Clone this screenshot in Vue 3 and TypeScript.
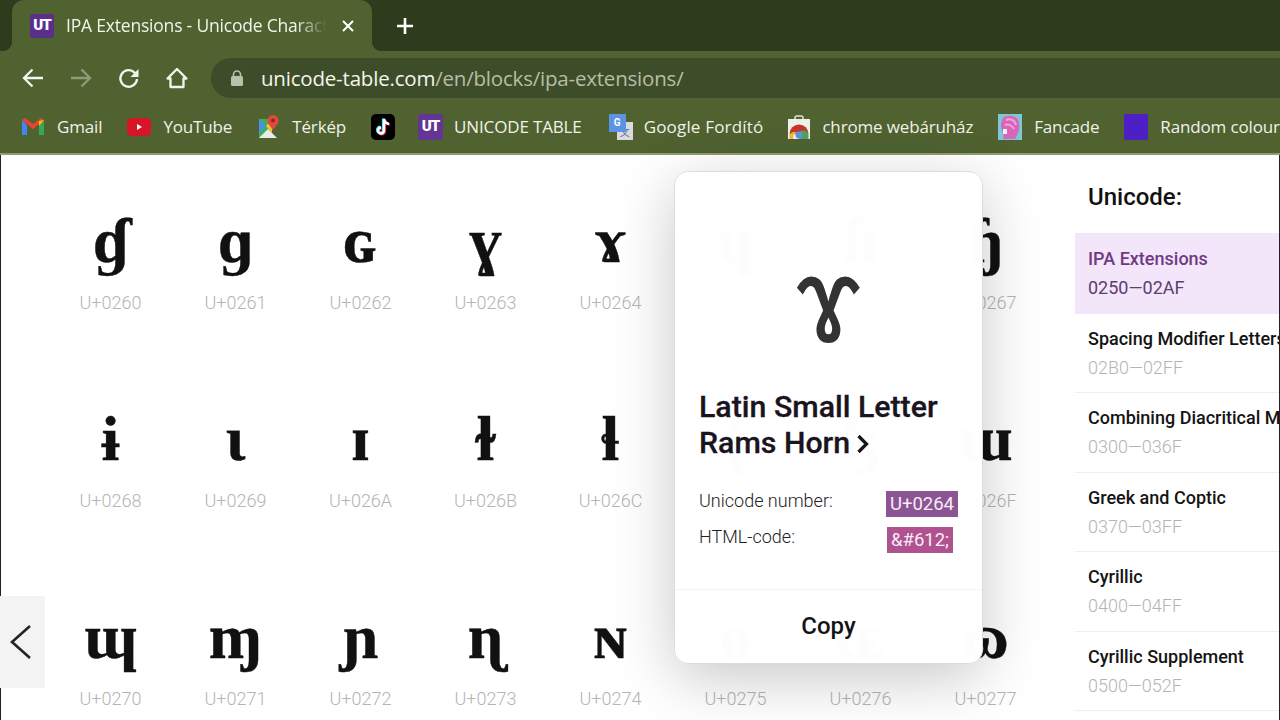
<script setup lang="ts">
const rows: string[][] = [
  ['ɠ','ɡ','ɢ','ɣ','ɤ','ɥ','ɦ','ɧ'],
  ['ɨ','ɩ','ɪ','ɫ','ɬ','ɭ','ɮ','ɯ'],
  ['ɰ','ɱ','ɲ','ɳ','ɴ','ɵ','ɶ','ɷ'],
]
const cells = rows.flat().map((ch) => ({
  ch,
  code: 'U+' + ch.codePointAt(0)!.toString(16).toUpperCase().padStart(4, '0'),
}))
const blocks = [
  { name: 'Spacing Modifier Letters', range: '02B0—02FF' },
  { name: 'Combining Diacritical Marks', range: '0300—036F' },
  { name: 'Greek and Coptic', range: '0370—03FF' },
  { name: 'Cyrillic', range: '0400—04FF' },
  { name: 'Cyrillic Supplement', range: '0500—052F' },
]
</script>

<template>
  <div class="page">
    <header class="tabbar">
      <div class="tab">
        <span class="ut"><span>UT</span></span>
        <span class="tab-title">IPA Extensions - Unicode Character Table</span>
        <svg class="tab-x" width="14" height="14" viewBox="0 0 14 14"><path d="M2 2l10 10M12 2L2 12" stroke="#fff" stroke-width="2" fill="none"/></svg>
      </div>
      <svg class="plus" width="20" height="20" viewBox="0 0 20 20"><path d="M10 2v16M2 10h16" stroke="#fff" stroke-width="2.6" fill="none"/></svg>
    </header>

    <div class="toolbar">
      <div class="navs">
        <svg width="24" height="24" viewBox="0 0 24 24"><path d="M22 12H3M11.500 3.500L3 12l8.500 8.500" stroke="#f4f6ee" stroke-width="2.300" fill="none"/></svg>
        <svg width="24" height="24" viewBox="0 0 24 24"><path d="M2 12h19M12.500 3.500L21 12l-8.500 8.500" stroke="#8f9c78" stroke-width="2.300" fill="none"/></svg>
        <svg width="24" height="24" viewBox="0 0 24 24"><path d="M20 13a8.300 8.300 0 1 1-2.400-6.400L20 9" stroke="#f4f6ee" stroke-width="2.300" fill="none"/><path d="M21.500 3v8h-8z" fill="#f4f6ee"/></svg>
        <svg width="24" height="24" viewBox="0 0 24 24"><path d="M12 3L2.500 12.500H5.500V21h13v-8.500h3z" stroke="#f4f6ee" stroke-width="2.300" fill="none" stroke-linejoin="round"/></svg>
      </div>
      <div class="omnibox">
        <svg width="14" height="18" viewBox="0 0 14 18"><path d="M3.500 8V5.500a3.500 3.500 0 0 1 7 0V8" stroke="#b9c0ab" stroke-width="1.600" fill="none"/><rect x="1" y="7" width="12" height="10" rx="1.500" fill="#b9c0ab"/></svg>
        <span class="url"><b>unicode-table.com</b><i>/en/blocks/ipa-extensions/</i></span>
      </div>
    </div>

    <nav class="bookmarks">
      <a class="bm">
        <svg width="24" height="20" viewBox="0 0 24 20"><path d="M1 3v15h5V8z" fill="#4285f4"/><path d="M18 8v10h5V3z" fill="#34a853"/><path d="M1 3l11 9 11-9-3-2-8 6-8-6z" fill="#ea4335"/><path d="M18 4l5-1-5 6z" fill="#fbbc04"/></svg>
        <span>Gmail</span>
      </a>
      <a class="bm">
        <svg width="24" height="20" viewBox="0 0 24 20"><rect y="1" width="24" height="18" rx="4.500" fill="#d81427"/><path d="M10 7l5 3-5 3z" fill="#fff"/></svg>
        <span>YouTube</span>
      </a>
      <a class="bm maps">
        <svg width="24" height="26" viewBox="0 0 24 26"><path d="M2 5h13v19H2z" fill="#3fae5a"/><path d="M2 24l9-9 9 9z" fill="#e8eaed"/><path d="M2 5l7 7-7 7z" fill="#4a8ff0"/><path d="M9 12l6-7v14z" fill="#fbc02d"/><path d="M16 1a5.500 5.500 0 0 1 5.500 5.500C21.500 10.500 18 12 16 17c-2-5-5.500-6.500-5.500-10.500A5.500 5.500 0 0 1 16 1z" fill="#e2483b"/><circle cx="16" cy="6.500" r="2" fill="#8c2a22"/></svg>
        <span>Térkép</span>
      </a>
      <a class="bm solo">
        <svg width="24" height="26" viewBox="0 0 24 26"><rect width="24" height="26" rx="5" fill="#000"/><path d="M13 5v11.500a3 3 0 1 1-3-3M13 5c.5 3 2.500 4.500 5 5" stroke="#25f4ee" stroke-width="2.600" fill="none" transform="translate(-.8 -.6)"/><path d="M13 5v11.500a3 3 0 1 1-3-3M13 5c.5 3 2.500 4.500 5 5" stroke="#fe2c55" stroke-width="2.600" fill="none" transform="translate(.8 .6)"/><path d="M13 5v11.500a3 3 0 1 1-3-3M13 5c.5 3 2.500 4.500 5 5" stroke="#fff" stroke-width="2.400" fill="none"/></svg>
      </a>
      <a class="bm tight">
        <span class="ut small"><span>UT</span></span>
        <span>UNICODE TABLE</span>
      </a>
      <a class="bm translate">
        <span class="gt"><span class="gt-back">文</span><span class="gt-front">G</span></span>
        <span class="loose">Google Fordító</span>
      </a>
      <a class="bm">
        <svg width="22" height="24" viewBox="0 0 22 24"><path d="M7 5V3a2 2 0 0 1 2-2h4a2 2 0 0 1 2 2v2" stroke="#dfe3d5" stroke-width="1.500" fill="none"/><rect y="4" width="22" height="20" fill="#eef0ea"/><path d="M1.500 19a9.500 9.500 0 0 1 19 0z" fill="#c0392b"/><path d="M5 24a6 6 0 0 1 6-7l-6 0-3.500 2v5z" fill="#e9b93a"/><path d="M11 24v-7a6 6 0 0 1 9.500 2v5z" fill="#4ea35a"/><circle cx="11" cy="20" r="3.500" fill="#5a93e0"/></svg>
        <span>chrome webáruház</span>
      </a>
      <a class="bm">
        <svg width="24" height="26" viewBox="0 0 24 26"><rect width="24" height="26" fill="#7cc8d6"/><path d="M6 3c6-3 14-1 15 6 1 6-1 12-4 16H5c2-4-2-8-2-13 0-4 1-7 3-9z" fill="#d966b8"/><path d="M8 6c4-2 9 0 10 5M7 11c3-1 7 0 9 4" stroke="#f2a6dc" stroke-width="2" fill="none"/><rect x="5" y="15" width="4" height="5" fill="#e9f2f4"/></svg>
        <span>Fancade</span>
      </a>
      <a class="bm">
        <span class="swatch"></span>
        <span>Random colour</span>
      </a>
    </nav>

    <main class="content">
      <section class="chars">
        <div v-for="c in cells" :key="c.code" class="cell">
          <div class="glyph">{{ c.ch }}</div>
          <div class="code">{{ c.code }}</div>
        </div>
      </section>

      <aside class="side">
        <h2>Unicode:</h2>
        <div class="block active">
          <div class="b-name">IPA Extensions</div>
          <div class="b-range">0250—02AF</div>
        </div>
        <div v-for="b in blocks" :key="b.name" class="block">
          <div class="b-name">{{ b.name }}</div>
          <div class="b-range">{{ b.range }}</div>
        </div>
      </aside>

      <button class="back" aria-label="Previous">
        <svg width="26" height="38" viewBox="0 0 26 38"><path d="M22 3L4 19l18 16" stroke="#222" stroke-width="2.600" fill="none"/></svg>
      </button>

      <div class="card">
        <div class="big">ɤ</div>
        <h1>Latin Small Letter<br />Rams Horn<svg class="chev" width="14" height="20" viewBox="0 0 14 20"><path d="M2.500 2l8 8-8 8" stroke="#1a1420" stroke-width="3.200" fill="none"/></svg></h1>
        <dl>
          <div class="kv"><dt>Unicode number:</dt><dd class="b1">U+0264</dd></div>
          <div class="kv"><dt>HTML-code:</dt><dd class="b2">&amp;#612;</dd></div>
        </dl>
        <div class="copy">Copy</div>
      </div>
    </main>
  </div>
</template>

<style>
html, body { margin: 0; background: #fff; }
</style>

<style scoped>
.page {
  position: relative;
  width: 1280px;
  height: 720px;
  overflow: hidden;
  display: flex;
  flex-direction: column;
  font-family: Roboto, "Liberation Sans", sans-serif;
  background: #fff;
}
.tabbar {
  height: 51px;
  flex: none;
  background: #2f3b1d;
  display: flex;
  align-items: center;
  padding-left: 12px;
}
.tab {
  position: relative;
  width: 360px;
  height: 51px;
  box-sizing: border-box;
  background: #4f6230;
  border-radius: 12px 12px 0 0;
  display: flex;
  align-items: center;
  padding-left: 18px;
  color: #f2f4ea;
}
.tab::before, .tab::after {
  content: "";
  position: absolute;
  bottom: 0;
  width: 10px;
  height: 10px;
}
.tab::before { left: -10px; background: radial-gradient(circle at 0 0, transparent 10px, #4f6230 10.500px); }
.tab::after { right: -10px; background: radial-gradient(circle at 100% 0, transparent 10px, #4f6230 10.500px); }
.ut {
  width: 24px;
  height: 24px;
  flex: none;
  background: #5a2f8a;
  border-radius: 3px;
  display: flex;
  align-items: center;
  justify-content: center;
  color: #fff;
  font: 900 15px/1 Roboto, sans-serif;
  letter-spacing: -1px;
}
.tab-title {
  width: 261px;
  margin-left: 12px;
  margin-bottom: 2px;
  flex: none;
  white-space: nowrap;
  overflow: hidden;
  font: 400 17.500px/24px "Open Sans", sans-serif;
  letter-spacing: -0.200px;
  -webkit-mask-image: linear-gradient(90deg, #000 88%, transparent 100%);
  mask-image: linear-gradient(90deg, #000 88%, transparent 100%);
}
.tab-x { margin-left: 14px; flex: none; }
.plus { margin-left: 23px; }

.toolbar {
  height: 47px;
  flex: none;
  background: #4f6230;
  display: flex;
  align-items: flex-end;
  padding-left: 21px;
}
.navs {
  display: flex;
  gap: 24px;
  height: 41px;
  align-items: center;
}
.omnibox {
  margin-left: 22px;
  flex: 1;
  height: 40px;
  background: #3e4d29;
  border-radius: 20px 0 0 20px;
  display: flex;
  align-items: center;
  padding-left: 19px;
}
.url {
  margin-left: 17px;
  padding-top: 1px;
  font: 400 20.500px/1 "Open Sans", sans-serif;
  letter-spacing: -0.200px;
  white-space: nowrap;
}
.url b { font-weight: 400; color: #f3f5ec; }
.url i { font-style: normal; color: #b6bea6; }

.bookmarks {
  height: 57px;
  flex: none;
  box-sizing: border-box;
  background: #4f6230;
  border-bottom: 2px solid #8d9c73;
  display: flex;
  align-items: center;
  padding: 2px 0 0 21px;
  gap: 25px;
  white-space: nowrap;
  overflow: hidden;
}
.bm {
  display: flex;
  align-items: center;
  gap: 12px;
  flex: none;
  color: #f0f2e8;
  font: 400 17px/24px "Open Sans", sans-serif;
  letter-spacing: -0.150px;
}
.bm.maps { gap: 11px; }
.bm.solo { margin-right: -2px; }
.bm.tight { gap: 11px; margin-right: 2px; }
.bm.translate { gap: 11px; }
.loose { letter-spacing: 0.180px; }
.ut.small { width: 25px; height: 26px; background: #633595; }
.gt {
  position: relative;
  width: 24px;
  height: 26px;
  flex: none;
}
.gt-front {
  position: absolute;
  left: 0;
  top: 0;
  width: 17px;
  height: 18px;
  background: #5b93e6;
  color: #fff;
  font: 700 10px/18px Roboto, sans-serif;
  text-align: center;
}
.gt-back {
  position: absolute;
  right: 0;
  bottom: 0;
  width: 16px;
  height: 18px;
  background: #d8dbe0;
  color: #6b7280;
  font: 400 10px/20px "Noto Sans CJK SC", sans-serif;
  text-align: center;
}
.swatch {
  width: 24px;
  height: 26px;
  background: #4d1fc4;
  border-radius: 2px;
  flex: none;
}

.content {
  position: relative;
  flex: 1;
  min-height: 0;
  display: flex;
  background: #fff;
  border-left: 1px solid #222;
  border-right: 1px solid #222;
}
.chars {
  width: 1000px;
  margin-left: 47px;
  flex: none;
  display: grid;
  grid-template-columns: repeat(8, 125px);
  grid-auto-rows: 198px;
  padding-top: 46px;
}
.cell {
  display: flex;
  flex-direction: column;
  align-items: center;
}
.glyph {
  height: 88px;
  font: 700 64px/80px "Liberation Serif", serif;
  color: #111;
  -webkit-text-stroke: 0.400px #111;
}
.code {
  margin-top: 2px;
  font: 300 18px/24px Roboto, sans-serif;
  color: #b4b4b4;
}
.side {
  margin-left: 27px;
  flex: 1;
  min-width: 0;
  overflow: hidden;
}
.side h2 {
  margin: 27px 0 21px 13px;
  font: 500 24px/30px Roboto, sans-serif;
  color: #111;
}
.block {
  box-sizing: border-box;
  height: 79.400px;
  padding: 13px 0 0 13px;
  border-bottom: 1px solid #eee;
  white-space: nowrap;
}
.block.active {
  height: 81px;
  padding-top: 14px;
  background: #f3e5fa;
  border-bottom: 0;
}
.b-name {
  font: 500 18px/24px Roboto, sans-serif;
  color: #141414;
}
.b-range {
  margin-top: 5px;
  font: 300 18px/24px Roboto, sans-serif;
  color: #b4b4b4;
}
.active .b-name { color: #6f3a82; }
.active .b-range { color: #5c3f6c; font-weight: 400; }

.back {
  position: absolute;
  left: -1px;
  top: 441px;
  width: 45px;
  height: 92px;
  padding: 0 0 0 8px;
  border: 0;
  background: #f3f3f3;
  display: flex;
  align-items: center;
}
.card {
  position: absolute;
  left: 673px;
  top: 16px;
  box-sizing: border-box;
  width: 309px;
  height: 493px;
  background: rgba(255, 255, 255, 0.993);
  border: 1px solid #dcdcdc;
  border-radius: 14px;
  box-shadow: 0 14px 60px rgba(0, 0, 0, 0.22);
  display: flex;
  flex-direction: column;
}
.big {
  margin-top: 76px;
  height: 110px;
  text-align: center;
  font: 500 106px/106px Roboto, sans-serif;
  color: #333;
  transform: scaleY(1.16);
}
.card h1 {
  margin: 31px 0 0 24px;
  font: 500 30.300px/36px Roboto, sans-serif;
  color: #1a1420;
  -webkit-text-stroke: 0.300px #1a1420;
}
.chev { vertical-align: -1px; margin-left: 6px; }
.card dl { margin: 30px 24px 0; }
.kv {
  display: flex;
  align-items: flex-start;
  height: 36px;
}
.kv dt {
  width: 188px;
  margin-top: -2px;
  font: 300 18px/24px Roboto, sans-serif;
  color: #222;
}
.kv dd {
  margin: 0;
  padding: 0 4px;
  font: 400 18.500px/26px Roboto, sans-serif;
  color: #f8ecf8;
}
.b1 { background: #8a5592; }
.b2 { background: #b0528f; }
.copy {
  margin-top: auto;
  height: 74px;
  box-sizing: border-box;
  border-top: 1px solid #f3f3f3;
  text-align: center;
  font: 500 24px/73px Roboto, sans-serif;
  color: #141414;
}
</style>
